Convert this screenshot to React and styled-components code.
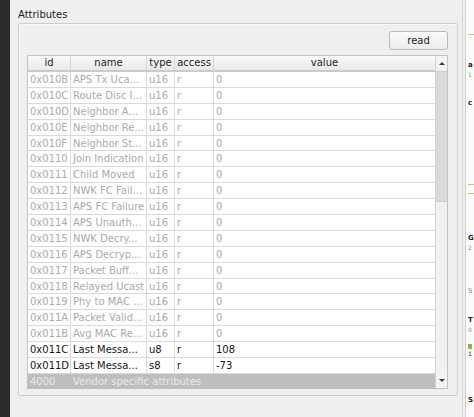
import React from "react";
import styled, { createGlobalStyle } from "styled-components";

const GlobalStyle = createGlobalStyle`
  html, body {
    margin: 0;
    padding: 0;
    background: #efefef;
    font-family: "DejaVu Sans", "Liberation Sans", sans-serif;
    font-size: 10px;
  }
`;

const Window = styled.div`
  display: flex;
  width: 474px;
  height: 417px;
  overflow: hidden;
  background: #efefef;
`;

const Dock = styled.div`
  width: 10px;
  flex-shrink: 0;
  background: #2b2b2b;
`;

const Main = styled.div`
  width: 453px;
  flex-shrink: 0;
  display: flex;
  flex-direction: column;
  padding: 0 4px 0 8px;
  box-sizing: border-box;
  border-right: 1px solid #d4d4d4;
`;

const Title = styled.div`
  height: 23px;
  line-height: 29px;
  color: #1e1e1e;
  white-space: nowrap;
`;

const GroupBox = styled.div`
  height: 373px;
  box-sizing: border-box;
  border: 1px solid #cdcdcd;
  border-radius: 2px;
  box-shadow: inset 1px 1px 0 #f8f8f8;
  padding: 7px 9px 0 8px;
  display: flex;
  flex-direction: column;
`;

const Toolbar = styled.div`
  display: flex;
  justify-content: flex-end;
  margin-bottom: 5px;
`;

const Button = styled.button`
  width: 59px;
  height: 19px;
  padding: 0;
  font-family: inherit;
  font-size: 10px;
  color: #222;
  border: 1px solid #b9b9b9;
  border-radius: 3px;
  background: linear-gradient(#fbfbfb, #ececec);
`;

const TableFrame = styled.div`
  height: 334px;
  box-sizing: border-box;
  border: 1px solid #c2c2c2;
  display: flex;
  background: #fff;
`;

const Grid = styled.div`
  flex: 1;
  display: flex;
  flex-direction: column;
`;

const cols = "43px 76px 28px 39px 1fr";

const HeaderRow = styled.div`
  display: grid;
  grid-template-columns: ${cols};
  height: 16px;
  box-sizing: border-box;
  background: linear-gradient(#fafafa, #e9e9e9);
  border-bottom: 2px solid #cbcbcb;
`;

const HeaderCell = styled.div`
  text-align: center;
  line-height: 14px;
  color: #1e1e1e;
  border-right: 1px solid #d6d6d6;
  white-space: nowrap;
  overflow: hidden;
  &:last-child {
    border-right: none;
  }
`;

const Row = styled.div`
  display: grid;
  grid-template-columns: ${cols};
  height: 15.9px;
  box-sizing: border-box;
  border-bottom: 1px solid #dadada;
  color: ${(p) => (p.$enabled ? "#161616" : "#ababab")};
`;

const Cell = styled.div`
  padding-left: 2px;
  line-height: 15px;
  white-space: nowrap;
  overflow: hidden;
  border-right: 1px solid #dadada;
  &:last-child {
    border-right: none;
  }
`;

const SectionRow = styled.div`
  display: flex;
  height: 15.9px;
  line-height: 15px;
  background: #bebebe;
  color: #e9e9e9;
  white-space: nowrap;
`;

const SectionId = styled.span`
  width: 43px;
  padding-left: 2px;
  box-sizing: border-box;
`;

const SectionName = styled.span`
  padding-left: 2px;
`;

const Scrollbar = styled.div`
  width: 11px;
  flex-shrink: 0;
  display: flex;
  flex-direction: column;
  background: #eeeeee;
  border-left: 1px solid #d2d2d2;
`;

const Arrow = styled.div`
  height: 15px;
  display: flex;
  align-items: center;
  justify-content: center;
  background: #f3f3f3;
  &::after {
    content: "";
    border-left: 3px solid transparent;
    border-right: 3px solid transparent;
    ${(p) =>
      p.$down
        ? "border-top: 3px solid #3a3a3a;"
        : "border-bottom: 3px solid #3a3a3a;"}
  }
`;

const Thumb = styled.div`
  height: 129px;
  background: #dadada;
  border-top: 1px solid #cfcfcf;
  border-bottom: 1px solid #cfcfcf;
`;

const Track = styled.div`
  flex: 1;
  background: #f1f1f1;
`;

const Side = styled.div`
  flex: 1;
  margin-left: 2px;
  border-left: 1px solid #d0d0d0;
  background: #fbfbfb;
  display: flex;
  flex-direction: column;
  overflow: hidden;
  padding-left: 2px;
`;

const SideText = styled.div`
  margin-top: ${(p) => p.$top || 0}px;
  font-size: ${(p) => (p.$small ? 6 : 7)}px;
  font-weight: ${(p) => (p.$bold ? 700 : 400)};
  color: ${(p) => (p.$muted ? "#8a8a8a" : "#222")};
  white-space: nowrap;
  line-height: 9px;
`;

const SideMark = styled.div`
  margin-top: ${(p) => p.$top}px;
  width: ${(p) => p.$w}px;
  height: ${(p) => p.$h}px;
  background: ${(p) => p.$color};
`;

const rows = [
  ["0x010B", "APS Tx Uca...", "u16", "r", "0"],
  ["0x010C", "Route Disc I...", "u16", "r", "0"],
  ["0x010D", "Neighbor A...", "u16", "r", "0"],
  ["0x010E", "Neighbor Re...", "u16", "r", "0"],
  ["0x010F", "Neighbor St...", "u16", "r", "0"],
  ["0x0110", "Join Indication", "u16", "r", "0"],
  ["0x0111", "Child Moved", "u16", "r", "0"],
  ["0x0112", "NWK FC Fail...", "u16", "r", "0"],
  ["0x0113", "APS FC Failure", "u16", "r", "0"],
  ["0x0114", "APS Unauth...", "u16", "r", "0"],
  ["0x0115", "NWK Decry...", "u16", "r", "0"],
  ["0x0116", "APS Decryp...", "u16", "r", "0"],
  ["0x0117", "Packet Buff...", "u16", "r", "0"],
  ["0x0118", "Relayed Ucast", "u16", "r", "0"],
  ["0x0119", "Phy to MAC ...", "u16", "r", "0"],
  ["0x011A", "Packet Valid...", "u16", "r", "0"],
  ["0x011B", "Avg MAC Re...", "u16", "r", "0"],
  ["0x011C", "Last Messa...", "u8", "r", "108", true],
  ["0x011D", "Last Messa...", "s8", "r", "-73", true],
];

const headers = ["id", "name", "type", "access", "value"];

export default function App() {
  return (
    <Window>
      <GlobalStyle />
      <Dock />
      <Main>
        <Title>Attributes</Title>
        <GroupBox>
          <Toolbar>
            <Button>read</Button>
          </Toolbar>
          <TableFrame>
            <Grid>
              <HeaderRow>
                {headers.map((h) => (
                  <HeaderCell key={h}>{h}</HeaderCell>
                ))}
              </HeaderRow>
              {rows.map((r) => (
                <Row key={r[0]} $enabled={r[5]}>
                  {r.slice(0, 5).map((c, i) => (
                    <Cell key={i}>{c}</Cell>
                  ))}
                </Row>
              ))}
              <SectionRow>
                <SectionId>4000</SectionId>
                <SectionName>Vendor specific attributes</SectionName>
              </SectionRow>
            </Grid>
            <Scrollbar>
              <Arrow />
              <Thumb />
              <Track />
              <Arrow $down />
            </Scrollbar>
          </TableFrame>
        </GroupBox>
      </Main>
      <Side>
        <SideMark $top={34} $w={6} $h={1} $color="#a6d86a" />
        <SideText $top={26} $bold>a</SideText>
        <SideText $small $muted>1</SideText>
        <SideText $top={20} $bold>c</SideText>
        <SideMark $top={76} $w={6} $h={1} $color="#a6d86a" />
        <SideMark $top={8} $w={6} $h={1} $color="#a6d86a" />
        <SideText $top={40} $bold>G</SideText>
        <SideText $small $muted>2</SideText>
        <SideText $top={35} $muted>S</SideText>
        <SideText $top={20} $bold>T</SideText>
        <SideText $small $muted>0</SideText>
        <SideMark $top={10} $w={4} $h={5} $color="#7fbf4a" />
        <SideText $small>1</SideText>
        <SideText $top={38} $bold>S</SideText>
      </Side>
    </Window>
  );
}
